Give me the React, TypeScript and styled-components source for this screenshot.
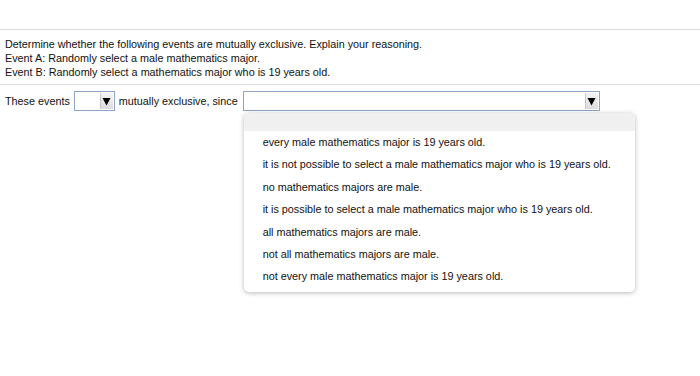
import React from "react";
import styled, { createGlobalStyle } from "styled-components";

const Global = createGlobalStyle`
  html, body { margin: 0; padding: 0; background: #fff; }
  body { font-family: "Liberation Sans", Arial, Helvetica, sans-serif; color: #111; }
`;

const Page = styled.div`
  padding-top: 29px;
  width: 700px;
  height: 376px;
  box-sizing: border-box;
`;

const Rule = styled.div`
  height: 1px;
  background: #dcdcdc;
`;

const Question = styled.div`
  padding: 7px 5px 5px;
  font-size: 10.8px;
  line-height: 14px;
`;

const Line = styled.div``;

const AnswerRow = styled.div`
  display: flex;
  align-items: center;
  padding: 6px 5px 0;
  font-size: 10.8px;
  gap: 4px;
`;

const Label = styled.span`
  white-space: nowrap;
`;

const SelectWrap = styled.div<{ $shift?: number }>`
  position: relative;
  margin-left: ${(p) => p.$shift ?? 0}px;
`;

const SelectBox = styled.div<{ $w: number }>`
  width: ${(p) => p.$w}px;
  height: 20px;
  box-sizing: border-box;
  border: 1px solid #8ea4c4;
  background: #fff;
  display: flex;
  justify-content: flex-end;
  align-items: center;
  padding-right: 1px;
`;

const ArrowBtn = styled.div`
  width: 13px;
  height: 16px;
  box-sizing: border-box;
  background: linear-gradient(#f4f4f4, #dcdcdc);
  border-left: 1px solid #c8c8c8;
  display: flex;
  align-items: center;
  justify-content: center;
`;

const Menu = styled.div`
  position: absolute;
  top: 22px;
  left: 1px;
  width: 391px;
  background: #fff;
  border-radius: 5px;
  box-shadow: 0 1px 5px rgba(0, 0, 0, 0.28);
  padding-bottom: 4px;
  overflow: hidden;
  z-index: 5;
`;

const BlankItem = styled.div`
  height: 18px;
  background: #f0f0f0;
`;

const Item = styled.div`
  height: 22.4px;
  line-height: 22.4px;
  padding-left: 19px;
  font-size: 10.8px;
  color: #111;
  white-space: nowrap;
`;

const Arrow = () => (
  <svg width="9" height="9" viewBox="0 0 9 9">
    <polygon points="0.5,1 8.5,1 4.5,8.5" fill="#000" />
  </svg>
);

const options = [
  "every male mathematics major is 19 years old.",
  "it is not possible to select a male mathematics major who is 19 years old.",
  "no mathematics majors are male.",
  "it is possible to select a male mathematics major who is 19 years old.",
  "all mathematics majors are male.",
  "not all mathematics majors are male.",
  "not every male mathematics major is 19 years old.",
];

export default function App() {
  return (
    <Page>
      <Global />
      <Rule />
      <Question>
        <Line>Determine whether the following events are mutually exclusive. Explain your reasoning.</Line>
        <Line>Event A: Randomly select a male mathematics major.</Line>
        <Line>Event B: Randomly select a mathematics major who is 19 years old.</Line>
      </Question>
      <Rule />
      <AnswerRow>
        <Label>These events</Label>
        <SelectWrap>
          <SelectBox $w={41}>
            <ArrowBtn>
              <Arrow />
            </ArrowBtn>
          </SelectBox>
        </SelectWrap>
        <Label>mutually exclusive, since</Label>
        <SelectWrap $shift={1}>
          <SelectBox $w={357}>
            <ArrowBtn>
              <Arrow />
            </ArrowBtn>
          </SelectBox>
          <Menu>
            <BlankItem />
            {options.map((o) => (
              <Item key={o}>{o}</Item>
            ))}
          </Menu>
        </SelectWrap>
      </AnswerRow>
    </Page>
  );
}
